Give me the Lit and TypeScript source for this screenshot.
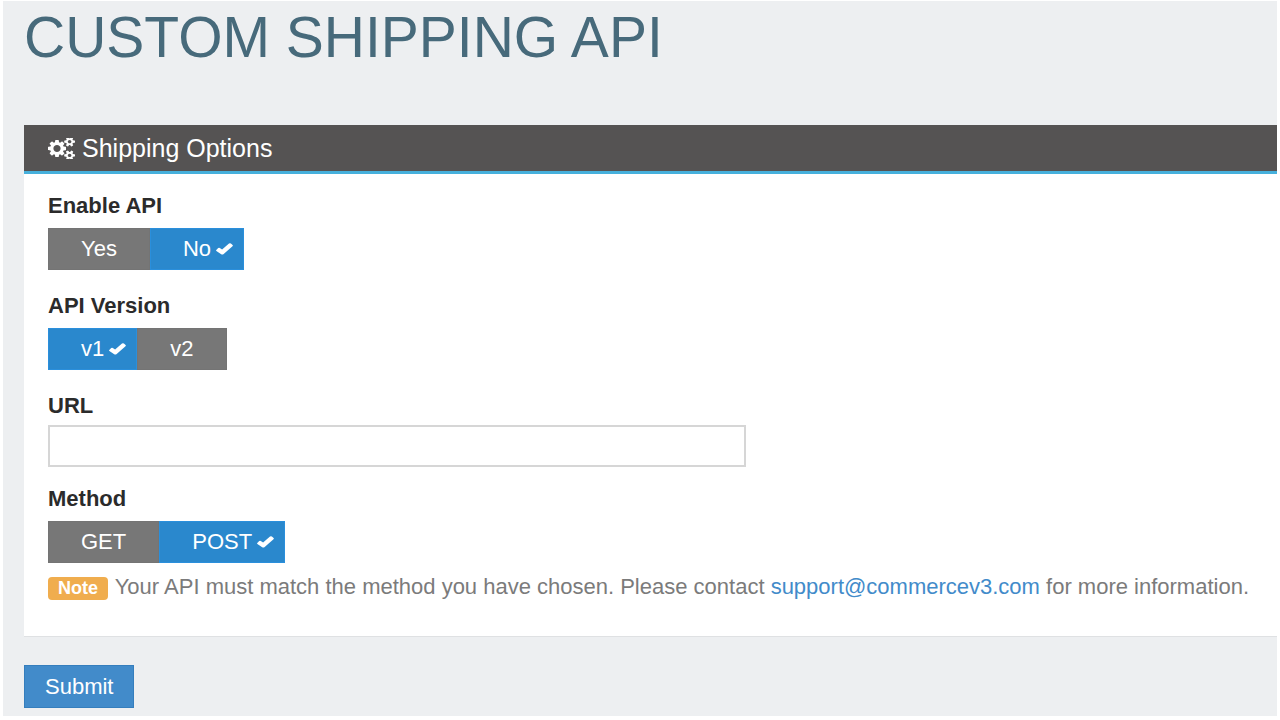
import { LitElement, html, css } from "lit";
import { customElement, property, state } from "lit/decorators.js";

const cogsPath =
  "M896 640q0-106-75-181t-181-75-181 75-75 181 75 181 181 75 181-75 75-181zm768 512q0-52-38-90t-90-38-90 38-38 90q0 53 37.5 90.5t90.5 37.5 90.5-37.5 37.5-90.5zm0-1024q0-52-38-90t-90-38-90 38-38 90q0 53 37.5 90.5t90.5 37.5 90.5-37.5 37.5-90.5zm-384 421v185q0 10-7 19.5t-16 10.5l-155 24q-11 35-32 76 34 48 90 115 7 10 7 20 0 12-7 19-23 30-82.5 89.5t-78.5 59.5q-11 0-21-7l-115-90q-37 19-77 31-11 108-23 155-7 24-30 24h-186q-11 0-20-7.5t-10-17.5l-23-153q-34-10-75-31l-118 89q-7 7-20 7-11 0-21-8-144-133-144-160 0-9 7-19 10-14 41-53t47-61q-23-44-35-82l-152-24q-10-1-17-9.5t-7-19.5v-185q0-10 7-19.5t16-10.5l155-24q11-35 32-76-34-48-90-115-7-11-7-20 0-12 7-20 22-30 82-89t79-59q11 0 21 7l115 90q34-18 77-32 11-108 23-154 7-24 30-24h186q11 0 20 7.5t10 17.5l23 153q34 10 75 31l118-89q8-7 20-7 11 0 21 8 144 133 144 160 0 9-7 19-12 16-42 54t-45 60q23 48 34 82l152 23q10 2 17 10.5t7 19.5zm640 533v140q0 16-149 31-12 27-30 52 51 113 51 138 0 4-4 7-122 71-124 71-8 0-46-47t-52-68q-20 2-30 2t-30-2q-14 21-52 68t-46 47q-2 0-124-71-4-3-4-7 0-25 51-138-18-25-30-52-149-15-149-31v-140q0-16 149-31 13-29 30-52-51-113-51-138 0-4 4-7 4-2 35-20t59-34 30-16q8 0 46 46.5t52 67.5q20-2 30-2t30 2q51-71 92-112l6-2q4 0 124 70 4 3 4 7 0 25-51 138 17 23 30 52 149 15 149 31zm0-1024v140q0 16-149 31-12 27-30 52 51 113 51 138 0 4-4 7-122 71-124 71-8 0-46-47t-52-68q-20 2-30 2t-30-2q-14 21-52 68t-46 47q-2 0-124-71-4-3-4-7 0-25 51-138-18-25-30-52-149-15-149-31v-140q0-16 149-31 13-29 30-52-51-113-51-138 0-4 4-7 4-2 35-20t59-34 30-16q8 0 46 46.5t52 67.5q20-2 30-2t30 2q51-71 92-112l6-2q4 0 124 70 4 3 4 7 0 25-51 138 17 23 30 52 149 15 149 31z";

@customElement("toggle-group")
class ToggleGroup extends LitElement {
  @property() label = "";
  @property() value = "";
  @property({ attribute: false }) options: string[] = [];

  static styles = css`
    :host {
      display: block;
    }
    .group {
      border: 0;
      margin: 0;
      padding: 0;
      min-width: 0;
    }
    .legend {
      padding: 0;
      margin-bottom: 10px;
      font-weight: bold;
      line-height: 24px;
      color: #2b2b2b;
    }
    .options {
      display: flex;
    }
    .option {
      display: flex;
      align-items: center;
      box-sizing: border-box;
      height: 42px;
      padding: 0 32px;
      border: 1px solid #747474;
      background: #777;
      color: #fff;
      cursor: pointer;
    }
    .option:has(.radio:checked) {
      padding-right: 10px;
      background: #2a88cd;
      border-color: #2a8fdc;
    }
    .option:has(.radio:focus-visible) {
      outline: 2px solid #1b5f92;
    }
    .radio {
      appearance: none;
      width: 0;
      height: 0;
      margin: 0;
      outline: none;
    }
    .check {
      width: 17px;
      height: 12px;
      margin-left: 5px;
      fill: #fff;
    }
  `;

  render() {
    return html`
      <fieldset class="group">
        <legend class="legend">${this.label}</legend>
        <div class="options">
          ${this.options.map(
            (option) => html`
              <label class="option">
                <input
                  class="radio"
                  type="radio"
                  name="choice"
                  .value=${option}
                  .checked=${option === this.value}
                  @change=${() => (this.value = option)}
                />
                <span>${option}</span>
                ${option === this.value
                  ? html`<svg class="check" viewBox="0 0 17 12" aria-hidden="true">
                      <path d="M.3 6.9 2.2 5.1Q3 4.5 3.8 5L6.1 6.6 13 .6Q14 0 14.9.6L16.6 2Q17.2 2.6 16.5 3.3L7.4 11.2Q6.3 12 5.2 11.2L.4 8Q-.2 7.5.3 6.9Z"/>
                    </svg>`
                  : ""}
              </label>
            `
          )}
        </div>
      </fieldset>
    `;
  }
}

@customElement("app-root")
class AppRoot extends LitElement {
  @state() url = "";

  static styles = css`
    :host {
      display: block;
      box-sizing: border-box;
      min-height: 100vh;
      padding: 1px 3px 4px;
      background: #fff;
      font-family: "Liberation Sans", Arial, sans-serif;
      font-size: 22px;
    }
    .page {
      box-sizing: border-box;
      min-height: calc(100vh - 5px);
      padding: 4px 0 8px 21px;
      background: #edeff1;
    }
    .title {
      margin: 0 0 56px;
      font-size: 57px;
      font-weight: normal;
      line-height: 64px;
      color: #476a7b;
    }
    .panel {
      background: #fff;
      border-bottom: 1px solid #dfe1e3;
    }
    .panel-head {
      display: flex;
      align-items: center;
      gap: 7px;
      padding: 0 24px;
      background: #555353;
      border-bottom: 3px solid #46b0dc;
      color: #fff;
    }
    .panel-title {
      margin: 0;
      font-size: 25px;
      font-weight: normal;
      line-height: 46px;
    }
    .cogs {
      width: 27px;
      height: 21px;
      fill: #fff;
    }
    .form-body {
      padding: 20px 4px 36px 24px;
    }
    .choice {
      margin-bottom: 24px;
    }
    .text-field {
      display: flex;
      flex-direction: column;
      gap: 7px;
      margin-bottom: 20px;
    }
    .label {
      font-weight: bold;
      line-height: 24px;
      color: #2b2b2b;
    }
    .input {
      box-sizing: border-box;
      width: 57%;
      height: 42px;
      padding: 0 16px;
      border: 2px solid #d6d6d6;
      border-radius: 0;
      background: #fff;
      font: inherit;
      color: #555;
    }
    .method {
      margin-bottom: 12px;
    }
    .note {
      margin: 0;
      line-height: 24px;
      color: #7b7b7b;
    }
    .badge {
      display: inline-block;
      margin-right: 1px;
      padding: 0 10px;
      border-radius: 4px;
      background: #f0ad4e;
      color: #fff;
      font-size: 18px;
      font-weight: bold;
      line-height: 23px;
    }
    .link {
      color: #428bca;
      text-decoration: none;
    }
    .submit {
      display: block;
      height: 43px;
      margin-top: 28px;
      padding: 0 20px;
      border: 1px solid #357ebd;
      background: #428bca;
      color: #fff;
      font: inherit;
      cursor: pointer;
    }
  `;

  render() {
    return html`
      <main class="page">
        <h1 class="title">CUSTOM SHIPPING API</h1>
        <form @submit=${(e: Event) => e.preventDefault()}>
          <section class="panel">
            <header class="panel-head">
              <svg class="cogs" viewBox="0 -140 1920 1560" preserveAspectRatio="none" aria-hidden="true">
                <path d=${cogsPath} />
              </svg>
              <h2 class="panel-title">Shipping Options</h2>
            </header>
            <div class="form-body">
              <toggle-group class="choice" label="Enable API" value="No" .options=${["Yes", "No"]}></toggle-group>
              <toggle-group class="choice" label="API Version" value="v1" .options=${["v1", "v2"]}></toggle-group>
              <div class="text-field">
                <label class="label" for="url">URL</label>
                <input
                  class="input"
                  id="url"
                  type="text"
                  .value=${this.url}
                  @input=${(e: InputEvent) => (this.url = (e.target as HTMLInputElement).value)}
                />
              </div>
              <toggle-group class="method" label="Method" value="POST" .options=${["GET", "POST"]}></toggle-group>
              <p class="note">
                <span class="badge">Note</span>
                Your API must match the method you have chosen. Please contact
                <a class="link" href="mailto:support@commercev3.com">support@commercev3.com</a>
                for more information.
              </p>
            </div>
          </section>
          <button class="submit" type="submit">Submit</button>
        </form>
      </main>
    `;
  }
}
